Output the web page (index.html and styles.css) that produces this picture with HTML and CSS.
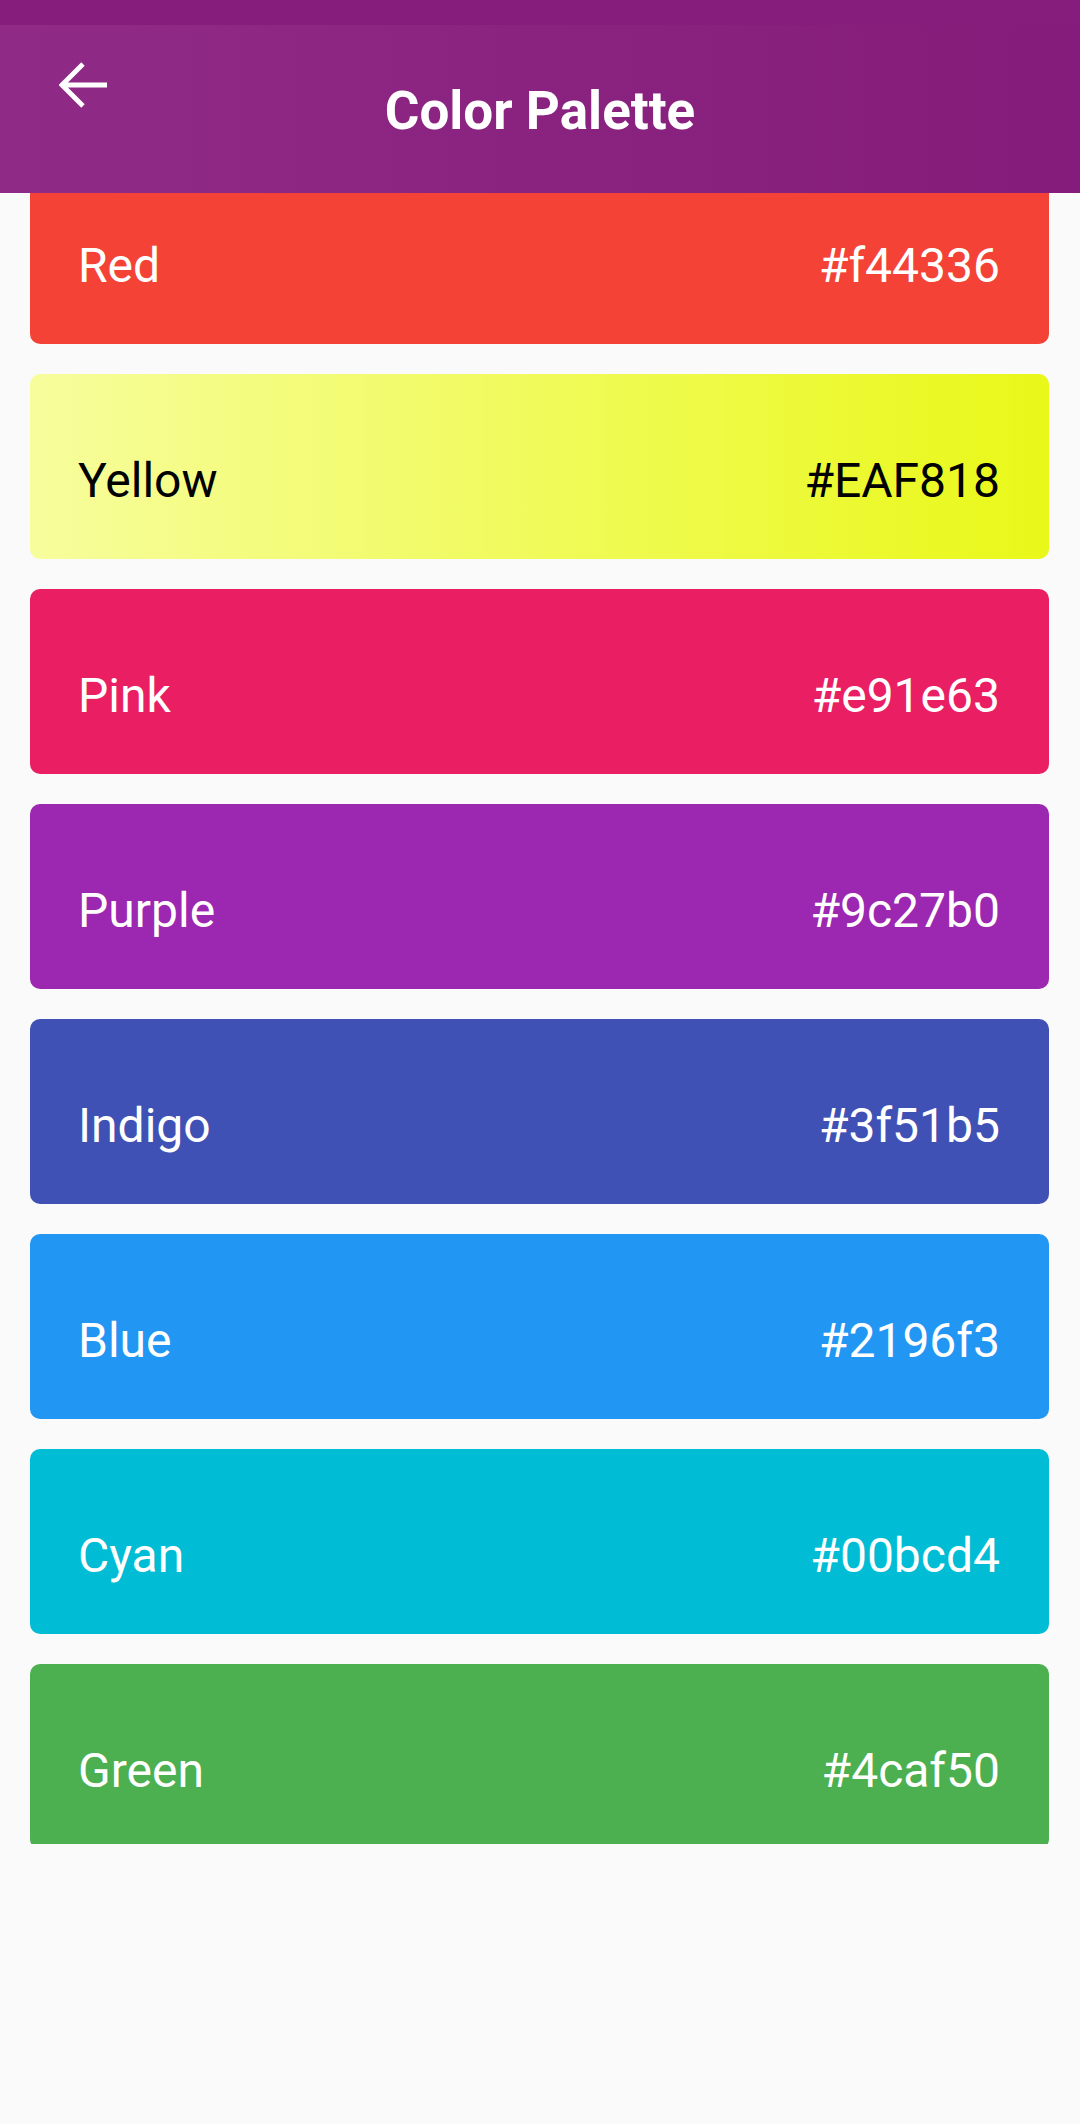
FILE: index.html
```html
<!DOCTYPE html>
<html lang="en">
<head>
    <meta charset="UTF-8">
    <meta name="viewport" content="width=device-width, initial-scale=1.0">
    <title>Color Palette</title>
    <link rel="stylesheet" href="styles.css">
</head>
<body>
    <div class="status-bar"></div>

    <header class="app-bar">
        <button class="back" aria-label="Back">
            <svg width="50" height="48" viewBox="0 0 50 48">
                <path d="M48 24H4M24 3L3 24l21 21" fill="none" stroke="#fff" stroke-width="4.8" stroke-linecap="butt" stroke-linejoin="miter"/>
            </svg>
        </button>
        <h1 class="title">Color Palette</h1>
    </header>

    <main class="viewport">
        <ul class="palette">
            <li class="swatch red"><span>Red</span><span>#f44336</span></li>
            <li class="swatch yellow"><span>Yellow</span><span>#EAF818</span></li>
            <li class="swatch pink"><span>Pink</span><span>#e91e63</span></li>
            <li class="swatch purple"><span>Purple</span><span>#9c27b0</span></li>
            <li class="swatch indigo"><span>Indigo</span><span>#3f51b5</span></li>
            <li class="swatch blue"><span>Blue</span><span>#2196f3</span></li>
            <li class="swatch cyan"><span>Cyan</span><span>#00bcd4</span></li>
            <li class="swatch green"><span>Green</span><span>#4caf50</span></li>
        </ul>
    </main>
</body>
</html>
```

FILE: styles.css
```css
html, body {
    margin: 0;
    padding: 0;
}
body {
    width: 1080px;
    height: 2124px;
    overflow: hidden;
    background-color: #fafafa;
    font-family: Roboto, "Liberation Sans", sans-serif;
}
.status-bar {
    height: 25px;
    background-color: #861c7b;
}
.app-bar {
    position: relative;
    z-index: 2;
    height: 168px;
    display: flex;
    align-items: center;
    justify-content: center;
    background: linear-gradient(to right, #8f2b86, #851b7a);
}
.back {
    position: absolute;
    left: 59px;
    top: 36px;
    padding: 0;
    border: none;
    background: none;
    line-height: 0;
}
.title {
    margin: 0;
    margin-top: 4px;
    color: white;
    font-size: 53px;
    font-weight: 700;
}
.viewport {
    height: 1651px;
    overflow: hidden;
}
.palette {
    list-style: none;
    margin: -34px 0 0 0;
    padding: 0 31px 0 30px;
    display: flex;
    flex-direction: column;
    gap: 30px;
}
.swatch {
    height: 185px;
    box-sizing: border-box;
    padding: 79px 49px 0 48px;
    border-radius: 10px;
    display: flex;
    justify-content: space-between;
    align-items: flex-start;
    color: white;
    font-size: 48px;
    line-height: 56px;
}
.red { background-color: #f44336; }
.yellow { background: linear-gradient(to right, #f7fd9c, #e9f818); color: black; }
.pink { background-color: #e91e63; }
.purple { background-color: #9c27b0; }
.indigo { background-color: #3f51b5; }
.blue { background-color: #2196f3; }
.cyan { background-color: #00bcd4; }
.green { background-color: #4caf50; }
```
